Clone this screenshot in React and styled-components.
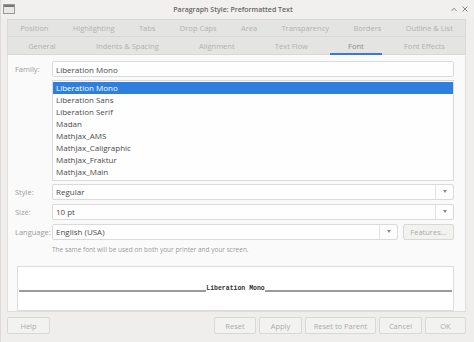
import React from 'react';
import styled, { createGlobalStyle } from 'styled-components';

const GlobalStyle = createGlobalStyle`
  html, body {
    margin: 0;
    padding: 0;
    background: #eeedec;
  }
  body {
    font-family: "Open Sans", "Noto Sans", sans-serif;
    font-size: 8px;
    color: #555;
  }
`;

const Window = styled.div`
  width: 474px;
  height: 342px;
  display: flex;
  flex-direction: column;
  background: #efeeed;
  border-left: 1px solid #dcdbda;
  box-sizing: border-box;
  overflow: hidden;
`;

const TitleBar = styled.div`
  height: 18px;
  display: flex;
  align-items: center;
  padding: 0 6px 0 2px;
  background: #f1f0ef;
`;

const Title = styled.div`
  flex: 1;
  text-align: center;
  font-size: 7px;
  font-weight: 600;
  color: #666;
`;

const TitleButtons = styled.div`
  display: flex;
  gap: 5px;
  align-items: center;
  color: #888;
`;

const Body = styled.div`
  flex: 1;
  display: flex;
  flex-direction: column;
  padding: 1px 8px 0 6px;
`;

const TabRow = styled.div`
  display: flex;
  height: 18px;
  background: #e4e4e2;
  border: 1px solid #d9d9d7;
  border-top: ${(p) => (p.$first ? '1px solid #d9d9d7' : 'none')};
  box-sizing: border-box;
`;

const Tab = styled.div`
  flex: 1 1 auto;
  display: flex;
  align-items: center;
  justify-content: center;
  position: relative;
  font-size: 7.5px;
  color: ${(p) => (p.$active ? '#8a8a8a' : '#b2b2b0')};
  white-space: nowrap;
  &::after {
    content: '';
    display: ${(p) => (p.$active ? 'block' : 'none')};
    position: absolute;
    left: 2px;
    right: 2px;
    bottom: -1px;
    height: 2px;
    background: #3a78d6;
  }
`;

const Panel = styled.div`
  height: 257px;
  background: #fafafa;
  border: 1px solid #dededc;
  border-top: none;
  box-sizing: border-box;
  display: flex;
  flex-direction: column;
  padding: 6px 11px 0 7px;
`;

const FieldRow = styled.div`
  display: flex;
  align-items: center;
  margin-top: ${(p) => p.$mt || 0}px;
`;

const Label = styled.div`
  width: 37px;
  flex: none;
  color: #9a9a9a;
  font-size: 7.5px;
`;

const Input = styled.div`
  flex: 1;
  height: 16px;
  box-sizing: border-box;
  border: 1px solid #dadada;
  border-radius: 2px;
  background: #fefefe;
  display: flex;
  align-items: center;
  padding-left: 3px;
  color: #4a4a4a;
`;

const Combo = styled.div`
  flex: 1;
  height: 16px;
  box-sizing: border-box;
  border: 1px solid #dadada;
  border-radius: 2px;
  background: #fefefe;
  display: flex;
  align-items: stretch;
  color: #4a4a4a;
`;

const ComboText = styled.div`
  flex: 1;
  display: flex;
  align-items: center;
  padding-left: 3px;
`;

const Arrow = styled.div`
  width: 17px;
  border-left: 1px solid #e2e2e2;
  display: flex;
  align-items: center;
  justify-content: center;
  &::before {
    content: '';
    border-left: 2.5px solid transparent;
    border-right: 2.5px solid transparent;
    border-top: 3px solid #888;
  }
`;

const ListBox = styled.div`
  margin: 3px 0 0 37px;
  height: 102px;
  box-sizing: border-box;
  border: 1px solid #dadada;
  background: #fefefe;
  overflow: hidden;
  padding-top: 1px;
`;

const ListItem = styled.div`
  height: 12px;
  line-height: 12px;
  padding-left: 3px;
  color: ${(p) => (p.$selected ? '#fff' : '#4a4a4a')};
  background: ${(p) => (p.$selected ? '#2f7fde' : 'transparent')};
`;

const Button = styled.div`
  height: 17px;
  width: ${(p) => p.$w}px;
  box-sizing: border-box;
  border: 1px solid #d8d8d6;
  border-radius: 2px;
  background: #f2f2f1;
  display: flex;
  align-items: center;
  justify-content: center;
  color: #acacab;
  font-size: 7.5px;
  flex: none;
`;

const Note = styled.div`
  margin: 5px 0 0 37px;
  font-size: 6.5px;
  color: #9a9a9a;
`;

const Preview = styled.div`
  margin: 12px 0 0 2px;
  height: 46px;
  box-sizing: border-box;
  border: 1px solid #dcdcdc;
  background: #fff;
  display: flex;
  align-items: center;
  padding: 0 1px;
`;

const PreviewLine = styled.div`
  flex: 1;
  height: 2px;
  background: #9a9a9a;
  margin-top: 5px;
`;

const PreviewText = styled.div`
  font-family: "Liberation Mono", monospace;
  font-size: 6.5px;
  font-weight: bold;
  color: #333;
`;

const Footer = styled.div`
  display: flex;
  gap: 3px;
  margin-top: 5px;
`;

const Spacer = styled.div`
  flex: 1;
`;

const fonts = [
  'Liberation Mono',
  'Liberation Sans',
  'Liberation Serif',
  'Madan',
  'MathJax_AMS',
  'MathJax_Caligraphic',
  'MathJax_Fraktur',
  'MathJax_Main',
  'MathJax_Math',
];

const tabs1 = ['Position', 'Highlighting', 'Tabs', 'Drop Caps', 'Area', 'Transparency', 'Borders', 'Outline & List'];
const tabs2 = ['General', 'Indents & Spacing', 'Alignment', 'Text Flow', 'Font', 'Font Effects'];

const WindowIcon = () => (
  <svg width="12" height="10" viewBox="0 0 12 10">
    <rect x="0.5" y="0.5" width="11" height="9" fill="#e8e8e8" stroke="#999" />
    <rect x="1" y="1" width="10" height="2" fill="#777" />
  </svg>
);

const App = () => (
  <Window>
    <GlobalStyle />
    <TitleBar>
      <WindowIcon />
      <Title>Paragraph Style: Preformatted Text</Title>
      <TitleButtons>
        <svg width="6" height="5" viewBox="0 0 6 5">
          <path d="M0.5 4 L3 1.2 L5.5 4" fill="none" stroke="#888" strokeWidth="1" />
        </svg>
        <svg width="6" height="6" viewBox="0 0 6 6">
          <path d="M0.5 0.5 L5.5 5.5 M5.5 0.5 L0.5 5.5" stroke="#888" strokeWidth="1" />
        </svg>
      </TitleButtons>
    </TitleBar>
    <Body>
      <TabRow $first>
        {tabs1.map((t) => (
          <Tab key={t}>{t}</Tab>
        ))}
      </TabRow>
      <TabRow>
        {tabs2.map((t) => (
          <Tab key={t} $active={t === 'Font'}>{t}</Tab>
        ))}
      </TabRow>
      <Panel>
        <FieldRow>
          <Label>Family:</Label>
          <Input>Liberation Mono</Input>
        </FieldRow>
        <ListBox>
          {fonts.map((f, i) => (
            <ListItem key={f} $selected={i === 0}>{f}</ListItem>
          ))}
        </ListBox>
        <FieldRow $mt={3}>
          <Label>Style:</Label>
          <Combo>
            <ComboText>Regular</ComboText>
            <Arrow />
          </Combo>
        </FieldRow>
        <FieldRow $mt={4}>
          <Label>Size:</Label>
          <Combo>
            <ComboText>10 pt</ComboText>
            <Arrow />
          </Combo>
        </FieldRow>
        <FieldRow $mt={4}>
          <Label>Language:</Label>
          <Combo>
            <ComboText>English (USA)</ComboText>
            <Arrow />
          </Combo>
          <Button $w={51} style={{ marginLeft: 5, height: 16 }}>Features...</Button>
        </FieldRow>
        <Note>The same font will be used on both your printer and your screen.</Note>
        <Preview>
          <PreviewLine />
          <PreviewText>Liberation Mono</PreviewText>
          <PreviewLine />
        </Preview>
      </Panel>
      <Footer>
        <Button $w={43}>Help</Button>
        <Spacer />
        <Button $w={42}>Reset</Button>
        <Button $w={43}>Apply</Button>
        <Button $w={71}>Reset to Parent</Button>
        <Button $w={43}>Cancel</Button>
        <Button $w={41}>OK</Button>
      </Footer>
    </Body>
  </Window>
);

export default App;
